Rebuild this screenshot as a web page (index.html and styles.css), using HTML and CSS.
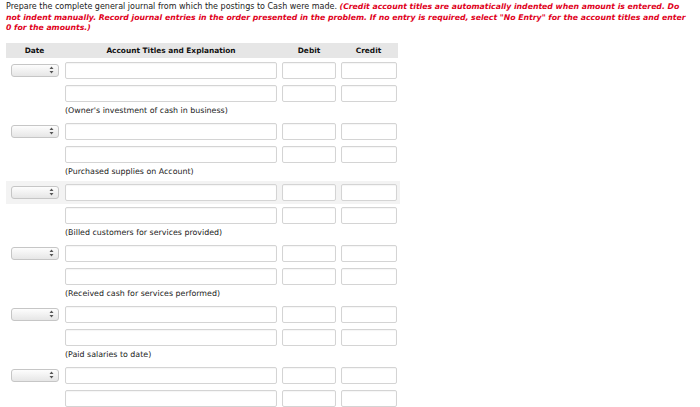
FILE: index.html
```html
<!DOCTYPE html>
<html>
<head>
<meta charset="utf-8">
<link rel="stylesheet" href="styles.css">
</head>
<body>
<p class="intro">Prepare the complete general journal from which the postings to Cash were made. <em class="warn">(Credit account titles are automatically indented when amount is entered. Do not indent manually. Record journal entries in the order presented in the problem. If no entry is required, select "No Entry" for the account titles and enter 0 for the amounts.)</em></p>

<div class="journal">
  <div class="row head">
    <div class="cell">Date</div>
    <div class="cell">Account Titles and Explanation</div>
    <div class="cell">Debit</div>
    <div class="cell">Credit</div>
  </div>

  <div class="row">
    <div class="cell date"><span class="select"><svg width="5" height="8" viewBox="0 0 5 8"><path d="M2.5 0.5 L4.5 3 L0.5 3 Z M2.5 7.5 L4.5 5 L0.5 5 Z" fill="#555"/></svg></span></div>
    <div class="cell"><span class="inp acct"></span></div>
    <div class="cell"><span class="inp deb"></span></div>
    <div class="cell"><span class="inp cred"></span></div>
  </div>
  <div class="row">
    <div class="cell"></div>
    <div class="cell"><span class="inp acct"></span></div>
    <div class="cell"><span class="inp deb"></span></div>
    <div class="cell"><span class="inp cred"></span></div>
  </div>
  <div class="note">(Owner's investment of cash in business)</div>

  <div class="row">
    <div class="cell date"><span class="select"><svg width="5" height="8" viewBox="0 0 5 8"><path d="M2.5 0.5 L4.5 3 L0.5 3 Z M2.5 7.5 L4.5 5 L0.5 5 Z" fill="#555"/></svg></span></div>
    <div class="cell"><span class="inp acct"></span></div>
    <div class="cell"><span class="inp deb"></span></div>
    <div class="cell"><span class="inp cred"></span></div>
  </div>
  <div class="row">
    <div class="cell"></div>
    <div class="cell"><span class="inp acct"></span></div>
    <div class="cell"><span class="inp deb"></span></div>
    <div class="cell"><span class="inp cred"></span></div>
  </div>
  <div class="note">(Purchased supplies on Account)</div>

  <div class="row hover">
    <div class="cell date"><span class="select"><svg width="5" height="8" viewBox="0 0 5 8"><path d="M2.5 0.5 L4.5 3 L0.5 3 Z M2.5 7.5 L4.5 5 L0.5 5 Z" fill="#555"/></svg></span></div>
    <div class="cell"><span class="inp acct"></span></div>
    <div class="cell"><span class="inp deb"></span></div>
    <div class="cell"><span class="inp cred"></span></div>
  </div>
  <div class="row">
    <div class="cell"></div>
    <div class="cell"><span class="inp acct"></span></div>
    <div class="cell"><span class="inp deb"></span></div>
    <div class="cell"><span class="inp cred"></span></div>
  </div>
  <div class="note">(Billed customers for services provided)</div>

  <div class="row">
    <div class="cell date"><span class="select"><svg width="5" height="8" viewBox="0 0 5 8"><path d="M2.5 0.5 L4.5 3 L0.5 3 Z M2.5 7.5 L4.5 5 L0.5 5 Z" fill="#555"/></svg></span></div>
    <div class="cell"><span class="inp acct"></span></div>
    <div class="cell"><span class="inp deb"></span></div>
    <div class="cell"><span class="inp cred"></span></div>
  </div>
  <div class="row">
    <div class="cell"></div>
    <div class="cell"><span class="inp acct"></span></div>
    <div class="cell"><span class="inp deb"></span></div>
    <div class="cell"><span class="inp cred"></span></div>
  </div>
  <div class="note">(Received cash for services performed)</div>

  <div class="row">
    <div class="cell date"><span class="select"><svg width="5" height="8" viewBox="0 0 5 8"><path d="M2.5 0.5 L4.5 3 L0.5 3 Z M2.5 7.5 L4.5 5 L0.5 5 Z" fill="#555"/></svg></span></div>
    <div class="cell"><span class="inp acct"></span></div>
    <div class="cell"><span class="inp deb"></span></div>
    <div class="cell"><span class="inp cred"></span></div>
  </div>
  <div class="row">
    <div class="cell"></div>
    <div class="cell"><span class="inp acct"></span></div>
    <div class="cell"><span class="inp deb"></span></div>
    <div class="cell"><span class="inp cred"></span></div>
  </div>
  <div class="note">(Paid salaries to date)</div>

  <div class="row">
    <div class="cell date"><span class="select"><svg width="5" height="8" viewBox="0 0 5 8"><path d="M2.5 0.5 L4.5 3 L0.5 3 Z M2.5 7.5 L4.5 5 L0.5 5 Z" fill="#555"/></svg></span></div>
    <div class="cell"><span class="inp acct"></span></div>
    <div class="cell"><span class="inp deb"></span></div>
    <div class="cell"><span class="inp cred"></span></div>
  </div>
  <div class="row">
    <div class="cell"></div>
    <div class="cell"><span class="inp acct"></span></div>
    <div class="cell"><span class="inp deb"></span></div>
    <div class="cell"><span class="inp cred"></span></div>
  </div>
</div>
</body>
</html>
```

FILE: styles.css
```css
html, body {
  margin: 0;
  padding: 0;
  background: #fff;
}
body {
  font-family: "DejaVu Sans", Verdana, sans-serif;
  font-size: 8px;
  color: #222;
}
.intro {
  margin: 2px 10px 0 6px;
  line-height: 10.5px;
  font-size: 8px;
}
.warn {
  color: #e0001b;
  font-weight: bold;
  font-style: italic;
  font-size: 7.74px;
  line-height: 10.5px;
}
.journal {
  margin: 9px 0 0 6px;
  width: 392px;
}
.row {
  display: grid;
  grid-template-columns: 57px 216px 60px 59px;
  height: 23px;
  align-items: center;
}
.row.head {
  height: 15px;
  background: #e6e6e6;
  font-weight: bold;
  font-size: 7.4px;
  color: #111;
  margin-bottom: 1px;
}
.row.head .cell {
  justify-content: center;
}
.row.hover {
  background: #f3f3f3;
  width: 394px;
}
.cell {
  display: flex;
  align-items: center;
}
.inp {
  display: block;
  height: 15px;
  border: 1px solid #d4d4d4;
  border-radius: 2px;
  background: #fff;
  box-shadow: inset 0 1px 1px rgba(0,0,0,0.04);
}
.inp.acct {
  margin-left: 2px;
  width: 210px;
}
.inp.deb {
  margin-left: 3px;
  width: 52px;
}
.inp.cred {
  margin-left: 2px;
  width: 54px;
}
.select {
  display: flex;
  align-items: center;
  justify-content: flex-end;
  box-sizing: border-box;
  margin-left: 5px;
  width: 48px;
  height: 13px;
  padding-right: 4px;
  border: 1px solid #c6c6c6;
  border-radius: 3px;
  background: linear-gradient(#fdfdfd, #e6e6e6);
}
.note {
  height: 15px;
  line-height: 11px;
  padding-left: 59px;
  font-size: 7.9px;
}
```
